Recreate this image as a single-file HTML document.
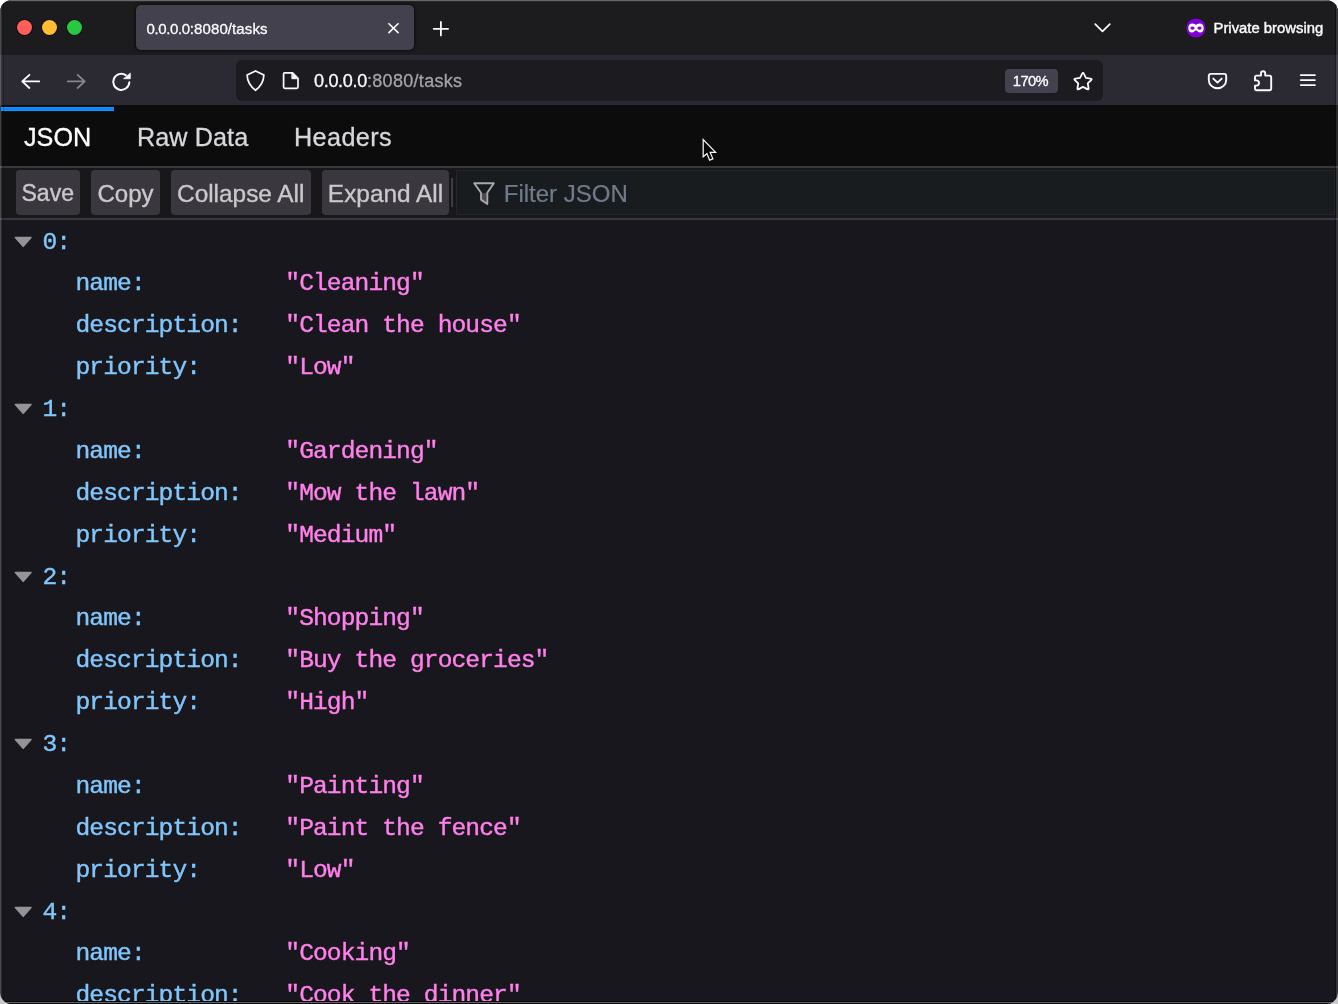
<!DOCTYPE html>
<html>
<head>
<meta charset="utf-8">
<title>0.0.0.0:8080/tasks</title>
<style>
*{box-sizing:border-box;margin:0;padding:0}
html,body{width:1338px;height:1004px;overflow:hidden}
body{background:linear-gradient(#ffffff 0,#ffffff 500px,#c9c9c9 504px,#c9c9c9 100%);font-family:"Liberation Sans",sans-serif;position:relative}
.abs{position:absolute}
#win{will-change:transform;position:absolute;left:0;top:0;width:1338px;height:1004px;border-radius:12px;overflow:hidden;background:#18171d}
/* window edge lines */
#edge{position:absolute;left:0;top:0;width:1338px;height:1004px;border-radius:12px;pointer-events:none;z-index:50;
  overflow:hidden}
#edge i{position:absolute;display:block}
#eL{left:0;top:0;width:4px;height:1004px;background:linear-gradient(90deg,rgba(255,255,255,.22) 0,rgba(255,255,255,.22) 1px,rgba(255,255,255,.08) 1px,rgba(255,255,255,.08) 2px,rgba(255,255,255,.01) 2px,rgba(255,255,255,.01) 3px,rgba(0,0,0,.2) 3px,rgba(0,0,0,.2) 4px)}
#eR{left:1335px;top:0;width:3px;height:1004px;background:linear-gradient(90deg,rgba(0,0,0,.33) 0,rgba(0,0,0,.33) 1px,rgba(255,255,255,.12) 1px,rgba(255,255,255,.12) 3px)}
#eT{left:0;top:0;width:1338px;height:3px;background:linear-gradient(180deg,rgba(255,255,255,.34) 0,rgba(255,255,255,.34) 1px,rgba(255,255,255,.06) 1px,rgba(255,255,255,.06) 2px,rgba(0,0,0,.1) 2px,rgba(0,0,0,.1) 3px)}
#bot1{left:0;top:1001px;width:1338px;height:1px;background:#060608;z-index:51}
#bot2{left:0;top:1002px;width:1338px;height:1px;background:#636363;z-index:51}
#bot3{left:0;top:1003px;width:1338px;height:1px;background:#0c0a08;z-index:51}

/* title bar */
#titlebar{left:0;top:0;width:1338px;height:55px;background:#1c1c1e}
.tl{position:absolute;top:19.9px;width:15px;height:15px;border-radius:50%;box-shadow:0 0 0 1px rgba(0,0,10,.55)}
#tab{left:136px;top:5px;width:278px;height:45px;background:#42414d;border-radius:5px;box-shadow:0 0 3px 1px rgba(0,0,0,.55)}
#tabtitle{left:146.5px;top:20.3px;font-size:15px;line-height:17px;color:#fbfbfe;white-space:nowrap;letter-spacing:.1px;-webkit-text-stroke:.3px #fbfbfe}
#tabtitle b{font-weight:normal;letter-spacing:-.37px}
#priv{left:1213.5px;top:20px;font-size:14.85px;line-height:17px;color:#fbfbfe;white-space:nowrap;-webkit-text-stroke:.4px #fbfbfe}

/* nav toolbar */
#navbar{left:0;top:54.5px;width:1338px;height:51.5px;background:#2b2a33}
#urlbar{left:235.5px;top:60px;width:867.6px;height:40.5px;background:#1c1b1f;border-radius:6px}
#urltext{left:314px;top:70.5px;font-size:18px;line-height:21px;color:#fbfbfe;white-space:nowrap;-webkit-text-stroke:.3px #fbfbfe}
#urltext b{font-weight:normal;letter-spacing:-.3px}
#urltext span{color:#a3a2a9;letter-spacing:.31px;-webkit-text-stroke:.3px #a3a2a9}
#zoom{left:1004.5px;top:68.5px;width:53.5px;height:24.5px;background:#42414d;border-radius:4px}
#zoomtext{left:1003.6px;top:73.3px;width:53.5px;text-align:center;font-size:14.7px;letter-spacing:-.65px;line-height:17px;color:#fbfbfe;-webkit-text-stroke:.35px #fbfbfe}

/* json viewer */
#jtabs{left:0;top:105px;width:1338px;height:61px;background:#0c0c0d}
#load{left:1px;top:106.6px;width:112.8px;height:4.5px;background:linear-gradient(180deg,#0a9eff 0,#0a84ff 40%,#0a84ff 60%,#0a9eff 100%);z-index:60}
.jt{position:absolute;top:122.5px;font-size:25.2px;-webkit-text-stroke:.3px currentColor;line-height:29px;white-space:nowrap;color:#d7d7db}
#jline1{left:0;top:166px;width:1338px;height:2px;background:#38383d}
#jbar{left:0;top:168px;width:1338px;height:50px;background:#18181a}
#jline2{left:0;top:218px;width:1338px;height:2px;background:#38383d}
.btn{position:absolute;top:170px;height:45px;background:#3a383e;border-radius:4px;color:#c9c9cc;font-size:24.4px;line-height:47px;text-align:center;white-space:nowrap;-webkit-text-stroke:.35px currentColor}
#sep{left:451.1px;top:178px;width:2px;height:29px;background:#3c3c41}
#filter{left:456px;top:170px;width:879px;height:45px;background:#191c1f;border:1px solid #232529}
#ftext{left:503.7px;top:179px;font-size:24.05px;-webkit-text-stroke:.2px currentColor;line-height:29px;color:#6f7b8a;white-space:nowrap}

/* tree */
#tree{left:0;top:221.6px;width:1338px;height:790px;font-family:"Liberation Mono",monospace;font-size:24.6px;letter-spacing:-.91px}
.row{position:absolute;left:0;height:42px;line-height:42px;white-space:pre}
.k{position:absolute;color:#80c6fb;-webkit-text-stroke:.4px #80c6fb}
.v{position:absolute;left:285.3px;color:#ff80ea;-webkit-text-stroke:.4px #ff80ea}
.tw{position:absolute;left:14.3px;top:14px;width:18.4px;height:11.8px}
</style>
</head>
<body>
<div id="win">
  <div id="titlebar" class="abs"></div>
  <div class="tl" style="left:16.5px;background:#fe5f57"></div>
  <div class="tl" style="left:42px;background:#febc2e"></div>
  <div class="tl" style="left:67px;background:#28c840"></div>
  <div id="tab" class="abs"></div>
  <div id="tabtitle" class="abs"><b>0.0.0.0</b>:8080/tasks</div>
  <div id="priv" class="abs">Private browsing</div>

  <div id="navbar" class="abs"></div>
  <div id="urlbar" class="abs"></div>
  <div id="urltext" class="abs"><b>0.0.0.0</b><span>:8080/tasks</span></div>
  <div id="zoom" class="abs"></div>
  <div id="zoomtext" class="abs">170%</div>

  <div id="jtabs" class="abs"></div>
  <div id="load" class="abs"></div>
  <div class="jt" style="left:24px;color:#ffffff">JSON</div>
  <div class="jt" style="left:137px;letter-spacing:.08px">Raw Data</div>
  <div class="jt" style="left:294px;letter-spacing:.4px">Headers</div>
  <div id="jline1" class="abs"></div>
  <div id="jbar" class="abs"></div>
  <div id="jline2" class="abs"></div>
  <div class="btn" style="left:15.5px;width:64.5px;font-size:23.1px">Save</div>
  <div class="btn" style="left:91px;width:69px;font-size:24px">Copy</div>
  <div class="btn" style="left:170.5px;width:140.5px">Collapse All</div>
  <div class="btn" style="left:322px;width:127px">Expand All</div>
  <div id="sep" class="abs"></div>
  <div id="filter" class="abs"></div>
  <div id="ftext" class="abs">Filter JSON</div>


  <!-- icons -->
  <svg class="abs" style="left:0;top:0" width="1338" height="230" viewBox="0 0 1338 230" fill="none" stroke="#fbfbfe" stroke-width="1.8" stroke-linecap="round" stroke-linejoin="round">
    <!-- tab close -->
    <path d="M388.9 23.7 L398.1 32.6 M398.1 23.7 L388.9 32.6" stroke-width="1.6"/>
    <!-- new tab plus -->
    <path d="M433.7 28.8 H448.1 M440.9 22.0 V35.4" stroke-width="1.8"/>
    <!-- list all tabs chevron -->
    <path d="M1095.2 24.2 L1102.5 31.3 L1109.8 24.2" stroke-width="1.7"/>
    <!-- back -->
    <path d="M22.3 81.4 H39.2 M29.4 74.8 L22.3 81.4 L29.4 88.0"/>
    <!-- forward -->
    <path d="M67.8 81.4 H84.7 M77.6 74.8 L84.7 81.4 L77.6 88.0" stroke="#86858d"/>
    <!-- reload -->
    <path d="M129.34 82.3 A8.05 8.05 0 1 1 125.74 75.14" stroke-width="2"/>
    <path d="M130.3 73.5 V78.7 H123.9 Z" fill="#fbfbfe" stroke-width=".8"/>
    <!-- shield -->
    <path d="M255.5 70.9 L263.9 75.0 C263.7 80.5 260.5 86.5 255.5 90.3 C250.5 86.5 247.3 80.5 247.1 75.0 Z" stroke-width="1.7"/>
    <!-- page -->
    <path d="M284.6 72.9 H292.6 L298.0 78.3 V87.0 Q298.0 88.3 296.7 88.3 H284.9 Q283.6 88.3 283.6 87.0 V73.9 Q283.6 72.9 284.6 72.9 Z" stroke-width="1.7"/>
    <path d="M292.2 72.9 L298.0 78.7 H292.2 Z" fill="#fbfbfe" stroke-width="1"/>
    <!-- star -->
    <path d="M1082.19 73.61 Q1083.00 72.00 1083.81 73.61 L1085.94 77.85 L1090.64 78.57 Q1092.42 78.84 1091.14 80.11 L1087.76 83.45 L1088.53 88.13 Q1088.82 89.91 1087.22 89.08 L1083.00 86.90 L1078.78 89.08 Q1077.18 89.91 1077.47 88.13 L1078.24 83.45 L1074.86 80.11 Q1073.58 78.84 1075.36 78.57 L1080.06 77.85 Z" stroke-width="1.8"/>
    <!-- pocket -->
    <path d="M1211.0 73.9 H1224.0 Q1226.2 73.9 1226.2 76.1 V80.0 A8.7 8.3 0 0 1 1208.8 80.0 V76.1 Q1208.8 73.9 1211.0 73.9 Z" stroke-width="1.9"/>
    <path d="M1213.3 78.6 L1217.5 82.6 L1221.7 78.6" stroke-width="1.9"/>
    <!-- extensions puzzle -->
    <path d="M1261.0 75.6 V73.3 A2.1 2.1 0 0 1 1265.2 73.3 V75.6 H1269.6 Q1271.2 75.6 1271.2 77.2 V88.6 Q1271.2 90.2 1269.6 90.2 H1256.6 Q1255.0 90.2 1255.0 88.6 V85.6 H1256.4 A2.6 2.6 0 0 0 1256.4 80.4 H1255.0 V77.2 Q1255.0 75.6 1256.6 75.6 Z" stroke-width="1.9"/>
    <!-- hamburger -->
    <path d="M1300.8 75.1 H1314.9 M1300.8 80.1 H1314.9 M1300.8 85.1 H1314.9" stroke-width="1.9"/>
    <!-- filter funnel -->
    <path d="M482 193 H486.4 V203 L482 199.8 Z" fill="#4a4a4f" stroke="none"/>
    <path d="M474.2 183.2 H493.8 L487.3 192.8 V204.0 L481.0 199.6 V192.8 Z" stroke="#a8a8aa" stroke-width="1.9"/>
  </svg>
  <!-- private browsing badge -->
  <svg class="abs" style="left:1186.4px;top:18px" width="20" height="20" viewBox="0 0 20 20">
    <circle cx="10" cy="10" r="9.6" fill="#8000d7"/>
    <path d="M2.3 10.2 C2.3 6.9 4.2 5.6 6.4 5.6 C8.3 5.6 9.0 6.7 10 6.7 C11.0 6.7 11.7 5.6 13.6 5.6 C15.8 5.6 17.7 6.9 17.7 10.2 C17.7 12.9 16.2 14.6 14.2 14.6 C12.1 14.6 11.3 12.6 10 12.6 C8.7 12.6 7.9 14.6 5.8 14.6 C3.8 14.6 2.3 12.9 2.3 10.2 Z" fill="#fff"/>
    <ellipse cx="6.5" cy="10.1" rx="2.15" ry="1.6" fill="#8000d7"/>
    <ellipse cx="13.5" cy="10.1" rx="2.15" ry="1.6" fill="#8000d7"/>
  </svg>
  <!-- mouse cursor -->
  <svg class="abs" style="left:698px;top:134px;z-index:40" width="26" height="32" viewBox="698 134 26 32">
    <path d="M703.2 139.6 V156.8 L706.9 153.6 L709.6 160.2 L712.9 158.8 L710.2 152.4 H715.6 Z" fill="#060607" stroke="#f4f4f4" stroke-width="1.25" stroke-linejoin="miter"/>
  </svg>
  <div id="tree" class="abs">
    <div class="row" style="top:0.00px"><svg class="tw" viewBox="0 0 18.4 11.8"><path d="M1.4 1.5 H17.0 L9.2 10.2 Z" fill="#949496" stroke="#949496" stroke-width="1.6" stroke-linejoin="round"/></svg><span class="k" style="left:42.5px">0:</span></div>
    <div class="row" style="top:41.88px"><span class="k" style="left:75.5px">name:</span><span class="v">&quot;Cleaning&quot;</span></div>
    <div class="row" style="top:83.75px"><span class="k" style="left:75.5px">description:</span><span class="v">&quot;Clean the house&quot;</span></div>
    <div class="row" style="top:125.62px"><span class="k" style="left:75.5px">priority:</span><span class="v">&quot;Low&quot;</span></div>
    <div class="row" style="top:167.50px"><svg class="tw" viewBox="0 0 18.4 11.8"><path d="M1.4 1.5 H17.0 L9.2 10.2 Z" fill="#949496" stroke="#949496" stroke-width="1.6" stroke-linejoin="round"/></svg><span class="k" style="left:42.5px">1:</span></div>
    <div class="row" style="top:209.38px"><span class="k" style="left:75.5px">name:</span><span class="v">&quot;Gardening&quot;</span></div>
    <div class="row" style="top:251.25px"><span class="k" style="left:75.5px">description:</span><span class="v">&quot;Mow the lawn&quot;</span></div>
    <div class="row" style="top:293.12px"><span class="k" style="left:75.5px">priority:</span><span class="v">&quot;Medium&quot;</span></div>
    <div class="row" style="top:335.00px"><svg class="tw" viewBox="0 0 18.4 11.8"><path d="M1.4 1.5 H17.0 L9.2 10.2 Z" fill="#949496" stroke="#949496" stroke-width="1.6" stroke-linejoin="round"/></svg><span class="k" style="left:42.5px">2:</span></div>
    <div class="row" style="top:376.88px"><span class="k" style="left:75.5px">name:</span><span class="v">&quot;Shopping&quot;</span></div>
    <div class="row" style="top:418.75px"><span class="k" style="left:75.5px">description:</span><span class="v">&quot;Buy the groceries&quot;</span></div>
    <div class="row" style="top:460.62px"><span class="k" style="left:75.5px">priority:</span><span class="v">&quot;High&quot;</span></div>
    <div class="row" style="top:502.50px"><svg class="tw" viewBox="0 0 18.4 11.8"><path d="M1.4 1.5 H17.0 L9.2 10.2 Z" fill="#949496" stroke="#949496" stroke-width="1.6" stroke-linejoin="round"/></svg><span class="k" style="left:42.5px">3:</span></div>
    <div class="row" style="top:544.38px"><span class="k" style="left:75.5px">name:</span><span class="v">&quot;Painting&quot;</span></div>
    <div class="row" style="top:586.25px"><span class="k" style="left:75.5px">description:</span><span class="v">&quot;Paint the fence&quot;</span></div>
    <div class="row" style="top:628.12px"><span class="k" style="left:75.5px">priority:</span><span class="v">&quot;Low&quot;</span></div>
    <div class="row" style="top:670.00px"><svg class="tw" viewBox="0 0 18.4 11.8"><path d="M1.4 1.5 H17.0 L9.2 10.2 Z" fill="#949496" stroke="#949496" stroke-width="1.6" stroke-linejoin="round"/></svg><span class="k" style="left:42.5px">4:</span></div>
    <div class="row" style="top:711.88px"><span class="k" style="left:75.5px">name:</span><span class="v">&quot;Cooking&quot;</span></div>
    <div class="row" style="top:753.75px"><span class="k" style="left:75.5px">description:</span><span class="v">&quot;Cook the dinner&quot;</span></div>
    <div class="row" style="top:795.62px"><span class="k" style="left:75.5px">priority:</span><span class="v">&quot;High&quot;</span></div>
  </div>
</div>
<div id="edge"><i id="eL"></i><i id="eR"></i><i id="eT"></i><i id="bot1"></i><i id="bot2"></i><i id="bot3"></i></div>
</body>
</html>
